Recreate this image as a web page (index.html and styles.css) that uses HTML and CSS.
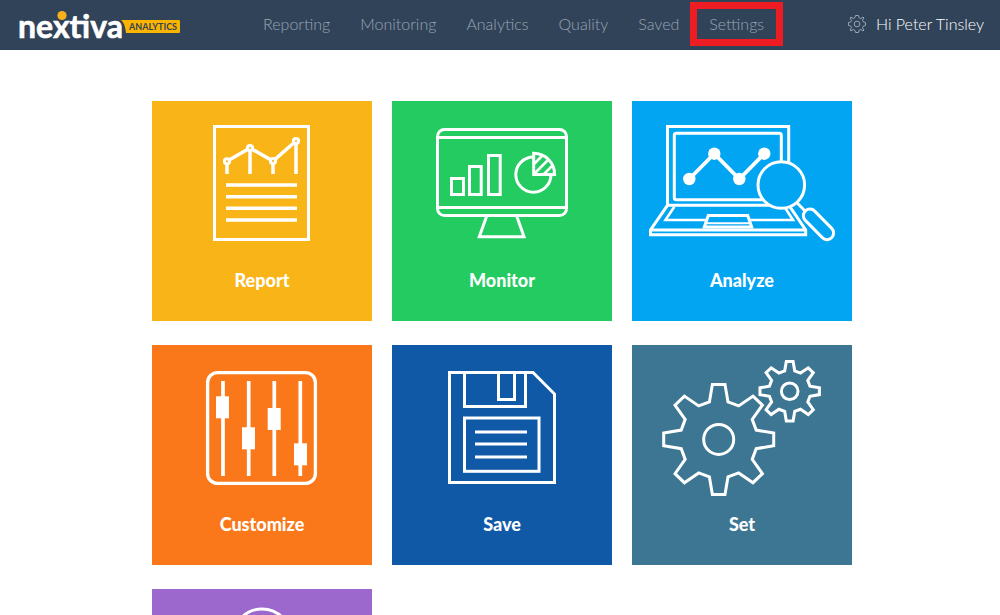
FILE: index.html
```
<!DOCTYPE html>
<html lang="en">
  <head>
    <meta charset="UTF-8" />
    <meta name="viewport" content="width=device-width, initial-scale=1.0" />
    <title>Nextiva Analytics</title>
    <link rel="stylesheet" href="styles.css">
  </head>
  <body>
    <header class="header">
      <a class="logo" href="#">
        <svg width="166" height="50" viewBox="0 0 166 50">
          <text class="logo-name" x="2" y="38">nextiva</text>
          <circle cx="46" cy="15.5" r="4.6" fill="#f9b21d" />
          <path d="M105 20H163Q164 20 164 21V32Q164 33 163 33H110Q109 23 105 20Z" fill="#fbb400" />
          <text class="logo-tag" x="113" y="30">ANALYTICS</text>
        </svg>
      </a>
      <nav class="nav">
        <a href="#">Reporting</a>
        <a href="#">Monitoring</a>
        <a href="#">Analytics</a>
        <a href="#">Quality</a>
        <a href="#">Saved</a>
        <a href="#" class="marked">Settings</a>
      </nav>
      <a class="user" href="#">
        <svg class="cog" width="20" height="20" viewBox="-60 -60 120 120">
          <path d="M-9 -51H9L13 -37L23 -33L36 -42L42 -36L33 -23L37 -13L51 -9V9L37 13L33 23L42 36L36 42L23 33L13 37L9 51H-9L-13 37L-23 33L-36 42L-42 36L-33 23L-37 13L-51 9V-9L-37 -13L-33 -23L-42 -36L-36 -42L-23 -33L-13 -37Z" />
          <circle r="17" />
        </svg>
        <span>Hi Peter Tinsley</span>
      </a>
    </header>

    <main class="tiles">
      <a class="tile report" href="#">
        <svg viewBox="0 0 220 160">
          <rect x="62.5" y="25.5" width="94" height="113" />
          <path d="M75 60.3L98 47L121 60L144 40M75 61V73M98 48V73M121 61V73M144 41V73" stroke-width="3.5" />
          <g class="hollow">
            <circle cx="75" cy="60.3" r="2.6" />
            <circle cx="98" cy="47" r="2.6" />
            <circle cx="121" cy="60" r="2.6" />
            <circle cx="144" cy="40" r="2.6" />
          </g>
          <path d="M74 84H145M74 95.7H145M74 107.3H145M74 119H145" stroke-width="3.5" />
        </svg>
        <span>Report</span>
      </a>

      <a class="tile monitor" href="#">
        <svg viewBox="0 0 220 160">
          <rect x="45.5" y="28.5" width="129" height="86" rx="7" />
          <path d="M45.5 36.5H174.5M45.5 106.5H174.5" />
          <rect x="59.5" y="77.5" width="12" height="16" />
          <rect x="77.5" y="65.5" width="11.7" height="28" />
          <rect x="96.5" y="54.5" width="11.7" height="39" />
          <path d="M141.5 56A17.6 17.6 0 1 0 159 73.5" />
          <path d="M141.7 52.3A21 21 0 0 1 162.6 73.4H141.7Z" />
          <path d="M142 63L150 55M142 73L157 58M152 73L161 64" stroke-width="2.6" />
          <path d="M94.7 115L87.3 135.7H132L124.7 115" />
        </svg>
        <span>Monitor</span>
      </a>

      <a class="tile analyze" href="#">
        <svg viewBox="0 0 220 160">
          <path d="M35.5 104.3V25.5H156.7V104.3" />
          <rect x="42.3" y="32.3" width="107" height="66.5" rx="2" />
          <path d="M57.3 78L82.3 52.7L107.3 78L132.3 52.7" stroke-width="3.8" />
          <g class="dots">
            <circle cx="57.3" cy="78" r="6.2" />
            <circle cx="82.3" cy="52.7" r="6.2" />
            <circle cx="107.3" cy="78" r="6.2" />
            <circle cx="132.3" cy="52.7" r="6.2" />
          </g>
          <path d="M157 104.3H35.5L18.5 129V133.8H173.7V129L157 104.3M18.5 129H173.7" />
          <path d="M42.3 105.7L33.5 119H161L152.5 106" stroke-width="2.6" />
          <path class="solid" d="M76.3 114.5H115.7L119.7 126H72.3Z" />
          <path d="M74 122.3H118" stroke-width="2" />
          <circle class="solid" cx="149.3" cy="84" r="23.3" />
          <path d="M164.7 101.5L174 111" />
          <rect class="solid" x="-6.6" y="-6.6" width="37.5" height="13.2" rx="6.6" transform="translate(178 114.7) rotate(45.5)" />
        </svg>
        <span>Analyze</span>
      </a>

      <a class="tile customize" href="#">
        <svg viewBox="0 0 220 160">
          <rect x="55.6" y="27.6" width="107.8" height="110.8" rx="10" stroke-width="3.3" />
          <path d="M71 36V131M96.7 36V131M122.3 36V131M148.3 36V131" stroke-width="3.7" />
          <g class="knobs">
            <rect x="64" y="51.3" width="13" height="22" />
            <rect x="90" y="82.3" width="13" height="22" />
            <rect x="115.7" y="63" width="13" height="22" />
            <rect x="142" y="98.3" width="13" height="22" />
          </g>
        </svg>
        <span>Customize</span>
      </a>

      <a class="tile save" href="#">
        <svg viewBox="0 0 220 160">
          <path d="M57.5 27.5H141L162.5 49V137.5H57.5Z" />
          <path d="M72.5 27.5V61.5H133.5V27.5M106.5 27.5V54.4H122.5V27.5" />
          <rect x="72.5" y="73" width="74.5" height="53.3" />
          <path d="M83 87H135M83 99H135M83 112H135" />
        </svg>
        <span>Save</span>
      </a>

      <a class="tile set" href="#">
        <svg viewBox="0 0 220 160">
          <defs>
            <path id="gear" d="M-6.3 -55H6.3L9.3 -37.5L20 -33.5L34.3 -43.3L43.7 -34.3L33.5 -20L37.5 -9.3L55 -6.3V6.3L37.5 9.3L33.5 20L43.7 34.3L34.3 43.3L20 33.5L9.3 37.5L6.3 55H-6.3L-9.3 37.5L-20 33.5L-34.3 43.3L-43.7 34.3L-33.5 20L-37.5 9.3L-55 6.3V-6.3L-37.5 -9.3L-33.5 -20L-43.7 -34.3L-34.3 -43.3L-20 -33.5L-9.3 -37.5Z" />
          </defs>
          <use href="#gear" transform="translate(86.7 94.4)" />
          <circle cx="86.7" cy="94.4" r="15" />
          <use href="#gear" transform="translate(157.7 46.2) scale(0.54)" stroke-width="5.6" />
          <circle cx="157.7" cy="46.2" r="8.3" />
        </svg>
        <span>Set</span>
      </a>

      <a class="tile profile" href="#">
        <svg viewBox="0 0 220 160">
          <circle cx="110" cy="49" r="29" />
        </svg>
      </a>
    </main>
  </body>
</html>
```

FILE: styles.css
```
* {
  margin: 0;
  padding: 0;
  box-sizing: border-box;
}
body {
  background-color: white;
  font-family: Lato, "Liberation Sans", sans-serif;
}
a {
  text-decoration: none;
}
.header {
  display: flex;
  align-items: flex-start;
  height: 50px;
  padding: 0 16px;
  font-size: 16px;
  font-weight: 300;
  line-height: 48px;
  background-color: #314359;
}
.logo {
  display: flex;
  margin-right: 66px;
}
.logo-name {
  font-size: 32px;
  font-weight: bold;
  fill: white;
  stroke: white;
  stroke-width: 0.6;
}
.logo-tag {
  font-size: 9px;
  font-weight: bold;
  fill: #314359;
}
.nav {
  display: flex;
}
.nav a {
  position: relative;
  padding: 0 15px;
  color: #98a5b3;
}
.nav .marked::after {
  content: "";
  position: absolute;
  inset: 2px -4px;
  border: 7px solid #ee1c23;
}
.user {
  display: flex;
  align-items: center;
  gap: 9px;
  margin-left: auto;
  color: white;
}
.cog {
  fill: none;
  stroke: #98a5b3;
  stroke-width: 6;
}
.tiles {
  display: grid;
  grid-template-columns: repeat(3, 220px);
  justify-content: center;
  gap: 24px 20px;
  padding: 51px 0 24px 4px;
}
.tile {
  height: 220px;
  text-align: center;
  color: white;
  font-size: 18px;
  font-weight: 900;
  line-height: 24px;
}
.tile svg {
  display: block;
  height: 160px;
  margin-bottom: 7px;
  fill: none;
  stroke: white;
  stroke-width: 3;
}
.tile .dots,
.tile .knobs {
  fill: white;
  stroke: none;
}
.report {
  background-color: #f9b418;
}
.report .hollow {
  fill: #f9b418;
}
.monitor {
  background-color: #23cb61;
}
.analyze {
  background-color: #02a5f2;
}
.analyze .solid {
  fill: #02a5f2;
}
.customize {
  background-color: #fa7819;
}
.save {
  background-color: #1059a7;
}
.set {
  background-color: #3d7692;
}
.profile {
  background-color: #9c68ce;
}
```
